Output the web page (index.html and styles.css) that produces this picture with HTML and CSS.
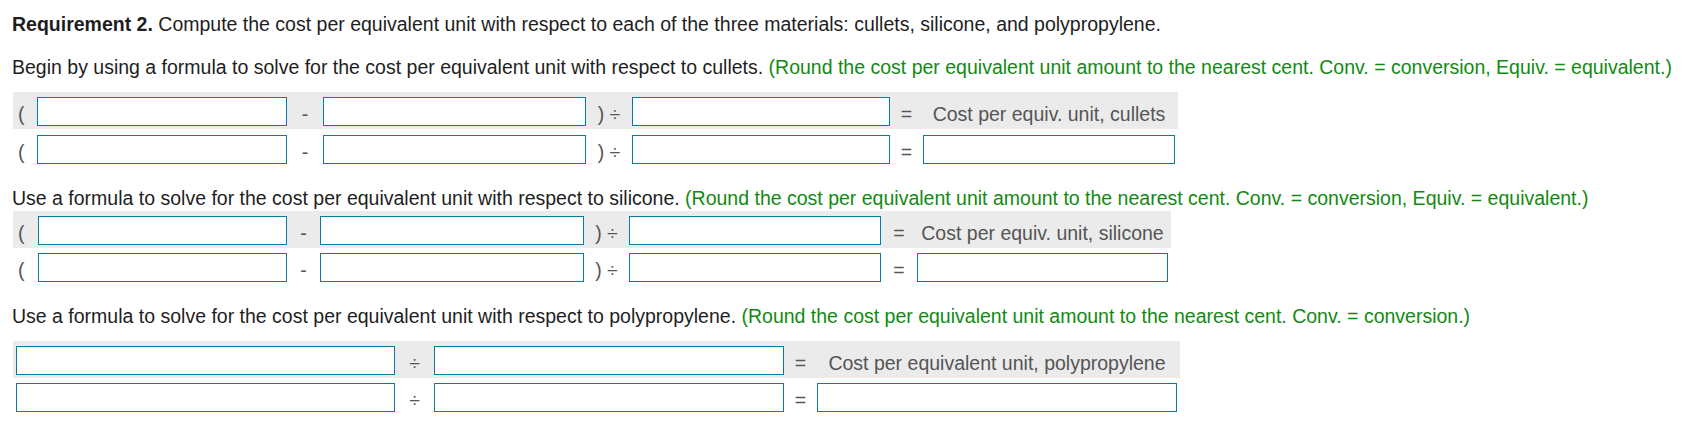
FILE: index.html
```html
<!DOCTYPE html>
<html lang="en">
<head>
<meta charset="utf-8">
<title>Requirement 2</title>
<link rel="stylesheet" href="styles.css">
</head>
<body>
<div class="page">
  <p class="req"><b>Requirement 2.</b> Compute the cost per equivalent unit with respect to each of the three materials: cullets, silicone, and polypropylene.</p>

  <section class="sec sec1">
    <p class="instr">Begin by using a formula to solve for the cost per equivalent unit with respect to cullets. <span class="hint">(Round the cost per equivalent unit amount to the nearest cent. Conv. = conversion, Equiv. = equivalent.)</span></p>
    <div class="rows">
      <div class="row band">
        <span class="sym paren">(</span><input class="box" type="text"><span class="sym">-</span><input class="box" type="text"><span class="sym">) ÷</span><input class="box" type="text"><span class="sym">=</span><span class="label">Cost per equiv. unit, cullets</span>
      </div>
      <div class="row">
        <span class="sym paren">(</span><input class="box" type="text"><span class="sym">-</span><input class="box" type="text"><span class="sym">) ÷</span><input class="box" type="text"><span class="sym">=</span><input class="box" type="text">
      </div>
    </div>
  </section>

  <section class="sec sec2">
    <p class="instr">Use a formula to solve for the cost per equivalent unit with respect to silicone. <span class="hint">(Round the cost per equivalent unit amount to the nearest cent. Conv. = conversion, Equiv. = equivalent.)</span></p>
    <div class="rows">
      <div class="row band">
        <span class="sym paren">(</span><input class="box" type="text"><span class="sym">-</span><input class="box" type="text"><span class="sym">) ÷</span><input class="box" type="text"><span class="sym">=</span><span class="label">Cost per equiv. unit, silicone</span>
      </div>
      <div class="row">
        <span class="sym paren">(</span><input class="box" type="text"><span class="sym">-</span><input class="box" type="text"><span class="sym">) ÷</span><input class="box" type="text"><span class="sym">=</span><input class="box" type="text">
      </div>
    </div>
  </section>

  <section class="sec sec3">
    <p class="instr">Use a formula to solve for the cost per equivalent unit with respect to polypropylene. <span class="hint">(Round the cost per equivalent unit amount to the nearest cent. Conv. = conversion.)</span></p>
    <div class="rows">
      <div class="row band">
        <input class="box" type="text"><span class="sym">÷</span><input class="box" type="text"><span class="sym">=</span><span class="label">Cost per equivalent unit, polypropylene</span>
      </div>
      <div class="row">
        <input class="box" type="text"><span class="sym">÷</span><input class="box" type="text"><span class="sym">=</span><input class="box" type="text">
      </div>
    </div>
  </section>
</div>
</body>
</html>
```

FILE: styles.css
```css
html, body {
  margin: 0;
  padding: 0;
  background: #ffffff;
}

body {
  font-family: "Liberation Sans", Arial, sans-serif;
  font-size: 19.5px;
  line-height: 22px;
  color: #1e1e1e;
}

.page {
  padding: 13px 0 0 12px;
}

p {
  margin: 0;
  white-space: nowrap;
}

.req b {
  font-weight: bold;
}

.sec1 {
  margin-top: 21px;
}

.sec2,
.sec3 {
  margin-top: 20px;
}

.hint {
  color: #128a12;
}

.rows {
  display: flex;
  flex-direction: column;
  margin-left: 1px;
}

.sec1 .rows {
  margin-top: 14px;
  row-gap: 1px;
}

.sec2 .rows {
  margin-top: 2px;
}

.sec3 .rows {
  margin-top: 14px;
}

.row {
  display: grid;
  width: max-content;
  height: 37px;
  box-sizing: border-box;
  padding: 5px 3px 3px;
  align-items: start;
}

.band {
  background: #ebebeb;
}

.sec1 .row {
  grid-template-columns: 21px 250px 36px 263px 46px 258px 33px 252px;
}

.sec2 .row {
  grid-template-columns: 22px 249px 33px 264px 45px 252px 36px 251px;
}

.sec3 .row {
  grid-template-columns: 379px 39px 350px 33px 360px;
}

.box {
  display: block;
  box-sizing: border-box;
  width: 100%;
  height: 29px;
  margin: 0;
  padding: 0 4px;
  border: 1px solid #0b7aa3;
  border-radius: 0;
  background: #ffffff;
  font: inherit;
  outline: none;
}

.sym,
.label {
  display: block;
  padding-top: 6px;
  color: #555555;
  text-align: center;
  white-space: nowrap;
}

.sym.paren {
  text-align: left;
  padding-left: 2px;
}
```
